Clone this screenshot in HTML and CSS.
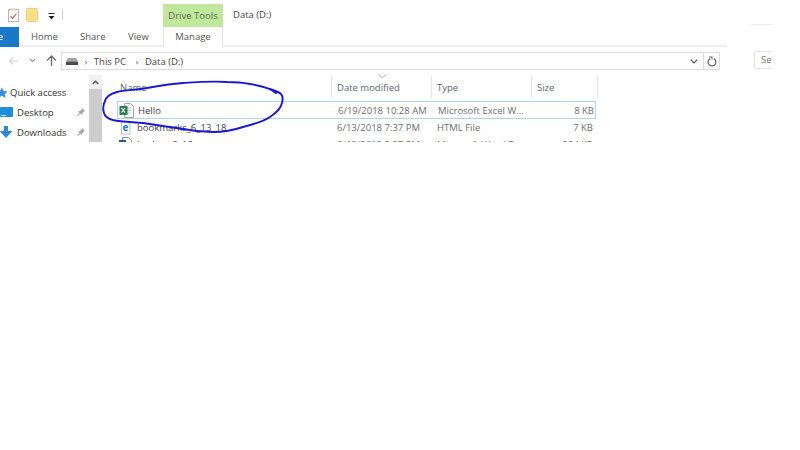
FILE: index.html
```html
<!DOCTYPE html>
<html lang="en">
<head>
    <meta charset="UTF-8">
    <title>Data (D:)</title>
    <link rel="stylesheet" href="styles.css">
</head>
<body>
    <div class="window">
        <!-- Title bar -->
        <div class="titlebar">
            <div class="qat">
                <svg class="qat-icon" width="11" height="14" viewBox="0 0 11 14"><rect x="0.500" y="1.500" width="10" height="12" fill="#fff" stroke="#b5b5b5"/><rect x="3" y="0.500" width="5" height="2" fill="#d9d2c0"/><path d="M2.500 8l2 2.500 4-5" fill="none" stroke="#d9534f" stroke-width="1.200"/></svg>
                <svg class="qat-icon" width="12" height="14" viewBox="0 0 12 14"><rect x="0.500" y="0.500" width="11" height="13" rx="1" fill="#fcdf8b" stroke="#f0cf78"/></svg>
                <svg class="qat-arrow" width="7" height="7" viewBox="0 0 7 7"><rect x="0.500" y="0" width="6" height="1" fill="#222"/><path d="M0.500 3h6l-3 3.500z" fill="#222"/></svg>
                <span class="qat-sep"></span>
            </div>
            <div class="context-tab">Drive Tools</div>
            <div class="window-title">Data (D:)</div>
        </div>

        <!-- Ribbon tabs -->
        <div class="ribbon-row">
            <div class="ribbon">
                <div class="tab tab-file">File</div>
                <div class="tab tab-home">Home</div>
                <div class="tab tab-share">Share</div>
                <div class="tab tab-view">View</div>
                <div class="tab tab-manage">Manage</div>
            </div>
            <div class="ribbon-end"></div>
        </div>

        <!-- Navigation -->
        <div class="nav-row">
            <div class="nav-buttons">
                <svg width="11" height="10" viewBox="0 0 11 10"><path d="M10 5H1.500M5 1.500L1.500 5 5 8.500" fill="none" stroke="#d4d4d4" stroke-width="1.200"/></svg>
                <svg width="7" height="5" viewBox="0 0 7 5"><path d="M1 1l2.500 2.500L6 1" fill="none" stroke="#9a9a9a" stroke-width="1.200"/></svg>
                <svg width="11" height="11" viewBox="0 0 11 11"><path d="M5.500 11V1.500M1 5.500l4.500-4.500L10 5.500" fill="none" stroke="#6d6d6d" stroke-width="1.300"/></svg>
            </div>
            <div class="address">
                <svg class="drive" width="12" height="7" viewBox="0 0 12 7"><path d="M2 0h8l2 3.500H0z" fill="#a5a5a5"/><rect y="3.500" width="12" height="3.500" fill="#4b4b4b"/></svg>
                <span class="crumb-arrow">›</span>
                <span class="crumb">This PC</span>
                <span class="crumb-arrow">›</span>
                <span class="crumb">Data (D:)</span>
                <svg class="addr-chevron" width="8" height="5" viewBox="0 0 8 5"><path d="M0.700 0.700L4 4l3.300-3.300" fill="none" stroke="#555" stroke-width="1.200"/></svg>
                <div class="refresh">
                    <svg width="10" height="11" viewBox="0 0 10 11"><path d="M3.200 2.600a3.900 3.900 0 1 0 3.600 0" fill="none" stroke="#666" stroke-width="1.200"/><path d="M2 1h3v2.600" fill="none" stroke="#666" stroke-width="1.100"/></svg>
                </div>
            </div>
            <div class="search"><span>Se</span></div>
        </div>

        <!-- Main area -->
        <div class="main">
            <div class="sidebar">
                <div class="side-items">
                    <div class="side-item side-top">
                        <svg width="8" height="11" viewBox="0 0 8 11"><path d="M2 0.500l1.700 3.600 4 .5-2.900 2.700.7 3.900L2 8.800l-3.500 1.900.7-3.900-2.900-2.700 4-.5z" fill="#3a8fd6"/></svg>
                        <span>Quick access</span>
                    </div>
                    <div class="side-item">
                        <svg width="13" height="10" viewBox="0 0 13 10"><rect width="13" height="10" rx="1" fill="#1f8fdc"/><rect x="1" y="8" width="5" height="1" fill="#cfe8f8"/></svg>
                        <span>Desktop</span>
                        <svg class="pin" width="8" height="8" viewBox="0 0 8 8"><path d="M5 0l3 3-1 .5-1.500 1.500-.5 2-1.500-1.500L1 8l-1 0 0-.5 2.500-2.500L1 3.500l2-.5L4.500 1.500z" fill="#a8a8a8"/></svg>
                    </div>
                    <div class="side-item">
                        <svg width="13" height="12" viewBox="0 0 13 12"><path d="M4 0h4v5h4.500L6 12 -0.500 5H4z" fill="#2f86d3"/></svg>
                        <span>Downloads</span>
                        <svg class="pin" width="8" height="8" viewBox="0 0 8 8"><path d="M5 0l3 3-1 .5-1.500 1.500-.5 2-1.500-1.500L1 8l-1 0 0-.5 2.500-2.500L1 3.500l2-.5L4.500 1.500z" fill="#a8a8a8"/></svg>
                    </div>
                </div>
                <div class="scrollbar">
                    <div class="scroll-up">
                        <svg width="7" height="5" viewBox="0 0 7 5"><path d="M0.700 4L3.500 1.200 6.300 4" fill="none" stroke="#555" stroke-width="1.400"/></svg>
                    </div>
                    <div class="scroll-thumb"></div>
                </div>
            </div>

            <div class="files">
                <div class="sort-mark">
                    <svg width="9" height="4" viewBox="0 0 9 4"><path d="M0.500 0.500L4.500 3.500 8.500 0.500" fill="none" stroke="#b0b0b0"/></svg>
                </div>
                <div class="file-head">
                    <div class="col-name">Name</div>
                    <div>Date modified</div>
                    <div>Type</div>
                    <div>Size</div>
                </div>
                <div class="file-row selected">
                    <div class="col-name">
                        <svg width="15" height="15" viewBox="0 0 15 15"><path d="M5.500 0.500h6l3 3v11h-9z" fill="#fff" stroke="#a5a5a5"/><path d="M8 5h4M8 7.500h4M8 10h4" stroke="#b5c9bb"/><rect x="0.500" y="3" width="8" height="9" fill="#2c7d52"/><path d="M2.500 5l3.500 4.500M6 5L2.500 9.500" stroke="#fff" stroke-width="1.100"/></svg>
                        <span>Hello</span>
                    </div>
                    <div>6/19/2018 10:28 AM</div>
                    <div>Microsoft Excel W...</div>
                    <div class="col-size">8 KB</div>
                </div>
                <div class="file-row">
                    <div class="col-name">
                        <svg width="15" height="15" viewBox="0 0 15 15"><path d="M3.500 1.500h6l2.500 2.500v10h-8.500z" fill="#fff" stroke="#bdbdbd"/><text x="4.500" y="11" class="ie-glyph">e</text></svg>
                        <span>bookmarks_6_13_18</span>
                    </div>
                    <div>6/13/2018 7:37 PM</div>
                    <div>HTML File</div>
                    <div class="col-size">7 KB</div>
                </div>
                <div class="file-row">
                    <div class="col-name">
                        <svg width="15" height="15" viewBox="0 0 15 15"><path d="M4.500 0.500h6l3 3v11h-9z" fill="#fff" stroke="#8a8a8a"/><rect x="1" y="3" width="7" height="8" fill="#2b5797"/></svg>
                        <span>budget_2_18</span>
                    </div>
                    <div>6/12/2018 3:37 PM</div>
                    <div>Microsoft Word D...</div>
                    <div class="col-size">284 KB</div>
                </div>
            </div>
        </div>

        <!-- Pen circle drawn over the screenshot -->
        <svg class="scribble" width="300" height="70" viewBox="100 75 300 70">
            <path d="M276 93C272 89 262 86 250 84C240 82 235 82 227 82C212 81 198 82 183 83C170 84 158 86 147 88C136 90 125 90 117 92C110 94 106 97 105 101C103 105 103 110 104 113C105 117 109 119 113 120C122 122 133 122 143 123C157 125 170 127 183 129C193 131 204 132 213 132C224 132 234 130 243 127C253 124 263 122 270 117C276 113 281 108 282 103C283 99 283 96 281 94C279 92 276 91 270 89" fill="none" stroke="#1a1ad0" stroke-width="1.900" stroke-linecap="round"/>
        </svg>
    </div>
</body>
</html>
```

FILE: styles.css
```css
* {
    margin: 0;
    padding: 0;
    box-sizing: border-box;
}

body {
    font-family: "Open Sans", "Noto Sans", sans-serif;
    font-size: 9.5px;
    color: #444;
    background-color: #fff;
    overflow: hidden;
}

.window {
    position: relative;
    width: 800px;
    height: 450px;
    overflow: hidden;
    background-color: #fff;
}

/* Title bar */
.titlebar {
    display: flex;
    height: 27px;
}

.qat {
    display: flex;
    align-items: center;
    width: 163px;
    padding: 3px 0 0 8px;
}

.qat-icon {
    margin-right: 7px;
}

.qat-arrow {
    margin: 2px 0 0 3px;
}

.qat-sep {
    width: 1px;
    height: 10px;
    margin-left: 7px;
    background-color: #ccc;
}

.context-tab {
    width: 60px;
    height: 23px;
    margin-top: 4px;
    background-color: #bfe89c;
    color: #5c6b50;
    text-align: center;
    line-height: 23px;
}

.window-title {
    margin-left: 10px;
    padding-top: 8px;
    color: #444;
}

/* Ribbon */
.ribbon-row {
    display: flex;
    height: 20px;
}

.ribbon {
    display: flex;
    width: 727px;
    height: 20px;
    border-bottom: 2px solid #eee;
}

.ribbon-end {
    width: 22px;
    height: 1px;
    margin: -3px 0 0 23px;
    background-color: #eee;
}

.tab {
    height: 20px;
    line-height: 19px;
    color: #555;
}

.tab-file {
    width: 19px;
    padding-right: 16px;
    background-color: #1a78c8;
    color: #fff;
    text-align: right;
    white-space: nowrap;
    direction: rtl;
}

.tab-home {
    margin-left: 12px;
    width: 49px;
}

.tab-share {
    width: 48px;
}

.tab-view {
    width: 35px;
}

.tab-manage {
    width: 60px;
    height: 20px;
    background-color: #fff;
    border-left: 1px solid #e4e4e4;
    border-right: 1px solid #e4e4e4;
    text-align: center;
}

/* Navigation */
.nav-row {
    display: flex;
    height: 17px;
    margin-top: 5px;
}

.nav-buttons {
    display: flex;
    align-items: center;
    width: 61px;
    padding-left: 8px;
    gap: 10px;
}

.address {
    display: flex;
    align-items: center;
    width: 659px;
    height: 18px;
    padding-left: 4px;
    border: 1px solid #dcdcdc;
    color: #444;
}

.crumb {
    margin-right: 3px;
}

.crumb-arrow {
    margin: 0 6.500px;
    color: #666;
}

.addr-chevron {
    margin-left: auto;
    margin-right: 5px;
}

.refresh {
    display: flex;
    align-items: center;
    justify-content: center;
    width: 16px;
    height: 16px;
    border-left: 1px solid #dcdcdc;
}

.search {
    width: 18px;
    height: 18px;
    margin: -1px 0 0 34px;
    padding-left: 6px;
    border: 1px solid #e4e4e4;
    border-right: none;
    color: #777;
    line-height: 15px;
}

/* Main area, cut off below the third row */
.main {
    display: flex;
    height: 73px;
    overflow: hidden;
}

.sidebar {
    display: flex;
    width: 102px;
    flex-shrink: 0;
}

.side-items {
    width: 89px;
    padding-top: 13px;
}

.side-item {
    display: flex;
    align-items: center;
    height: 20px;
    color: #333;
}

.side-item > svg:first-child {
    margin-right: 4px;
}

.side-item .pin {
    margin-left: auto;
    margin-right: 4px;
}

.side-top > svg:first-child {
    margin-right: 2px;
}

.scrollbar {
    width: 13px;
    margin-top: 6px;
    background-color: #f0f0f0;
}

.scroll-up {
    display: flex;
    align-items: center;
    justify-content: center;
    height: 14px;
}

.scroll-thumb {
    height: 60px;
    background-color: #cdcdcd;
}

/* File list */
.files {
    position: relative;
    padding: 6px 0 0 15px;
    width: 496px;
}

.sort-mark {
    position: absolute;
    top: 5px;
    left: 276px;
    line-height: 0;
}

.file-head,
.file-row {
    display: grid;
    grid-template-columns: 215px 100px 100px 64px;
    align-items: center;
    width: 479px;
}

.file-head {
    grid-template-columns: 215px 100px 100px 66px;
    width: 481px;
    height: 26px;
    padding-bottom: 2px;
    color: #5a6470;
}

.file-head > div {
    height: 22px;
    line-height: 23px;
    padding-left: 5px;
    border-right: 1px solid #e5e5e5;
}

.file-head .col-name {
    padding-left: 3px;
}

.file-row {
    height: 17px;
    color: #6d6d6d;
}

.file-row > div {
    padding-left: 5px;
    white-space: nowrap;
}

.file-row .col-name {
    display: flex;
    align-items: center;
    gap: 4px;
    padding-left: 1px;
    color: #444;
}

.file-row > .col-size {
    padding-right: 3px;
    text-align: right;
}

.selected {
    height: 18px;
    border: 1px solid #b3d4e8;
}

.ie-glyph {
    font-size: 10px;
    font-weight: 700;
    fill: #2a7fc9;
}

.scribble {
    position: absolute;
    top: 75px;
    left: 100px;
}
```
